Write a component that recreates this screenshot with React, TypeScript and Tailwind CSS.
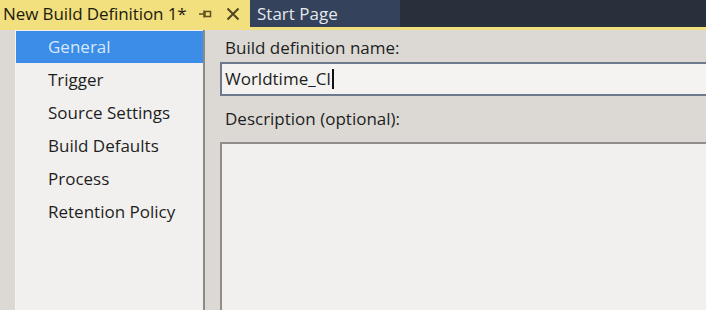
const FONT = "font-['Open_Sans','Noto_Sans',sans-serif]";

const NAV = ['General', 'Trigger', 'Source Settings', 'Build Defaults', 'Process', 'Retention Policy'];

function PinIcon() {
  return (
    <svg width="14" height="10" viewBox="0 0 14 10" className="text-[#5a4f1e]">
      <path d="M1 5h5" stroke="currentColor" strokeWidth="1.5" />
      <path d="M6 1.5v7" stroke="currentColor" strokeWidth="1.5" />
      <rect x="7" y="2.5" width="5.5" height="5" fill="none" stroke="currentColor" strokeWidth="1.5" />
    </svg>
  );
}

function CloseIcon() {
  return (
    <svg width="14" height="14" viewBox="0 0 14 14" className="text-[#4d4520]">
      <path d="M1.5 1.5l11 11M12.5 1.5l-11 11" stroke="currentColor" strokeWidth="2" />
    </svg>
  );
}

export default function App() {
  return (
    <div className={`w-[706px] h-[310px] overflow-hidden flex flex-col bg-[#dcd9d5] ${FONT}`}>
      {/* Document tabs */}
      <div className="flex h-[27px] bg-[#27303b] shrink-0">
        <div className="w-[250px] bg-[#f2df7d] flex items-center pl-[3px] text-[17px] text-[#1c1a10]">
          <span className="leading-none tracking-[-0.1px]">New Build Definition 1*</span>
          <span className="ml-[11px] mt-[1px] flex"><PinIcon /></span>
          <span className="ml-[14px] flex"><CloseIcon /></span>
        </div>
        <div className="w-[150px] bg-[#35425b] flex items-center pl-[7px] text-[17px] text-[#e4e8ee]">
          <span className="leading-none">Start Page</span>
        </div>
      </div>
      <div className="h-[3px] bg-[#f2df7d] shrink-0" />

      {/* Body */}
      <div className="flex flex-1 min-h-0">
        <div className="w-[16px] shrink-0 border-r border-[#f4f3f1]" />
        <div className="w-[189px] shrink-0 bg-[#f1f0ee] border-r-2 border-[#8d8b88] pt-[1px]">
          {NAV.map((item, i) => (
            <div
              key={item}
              className={`flex items-center pl-[32px] text-[17px] ${
                i === 0 ? 'bg-[#3b8de8] text-[#d6e8fc] h-[32px]' : 'h-[33px] text-[#1e1e1e]'
              }`}
            >
              {item}
            </div>
          ))}
        </div>

        <div className="flex-1 min-w-0 pl-[15px] pt-[4px] overflow-hidden">
          <div className="pl-[5px] h-[28px] flex items-center text-[17px] text-[#1e1e1e]">
            Build definition name:
          </div>
          <div className="w-[520px] h-[34px] border-2 border-[#6d7a8e] bg-[#f4f3f1] flex items-center pl-[3px] text-[17px] text-[#1e1e1e]">
            <span>Worldtime_CI</span>
            <span className="w-[1.5px] h-[20px] bg-[#111] ml-[1px]" />
          </div>
          <div className="pl-[5px] h-[46px] flex items-center text-[17px] text-[#1e1e1e]">
            Description (optional):
          </div>
          <div className="w-[520px] h-[200px] border-2 border-[#8f8d8a] bg-[#f1f0ee]" />
        </div>
      </div>
    </div>
  );
}
